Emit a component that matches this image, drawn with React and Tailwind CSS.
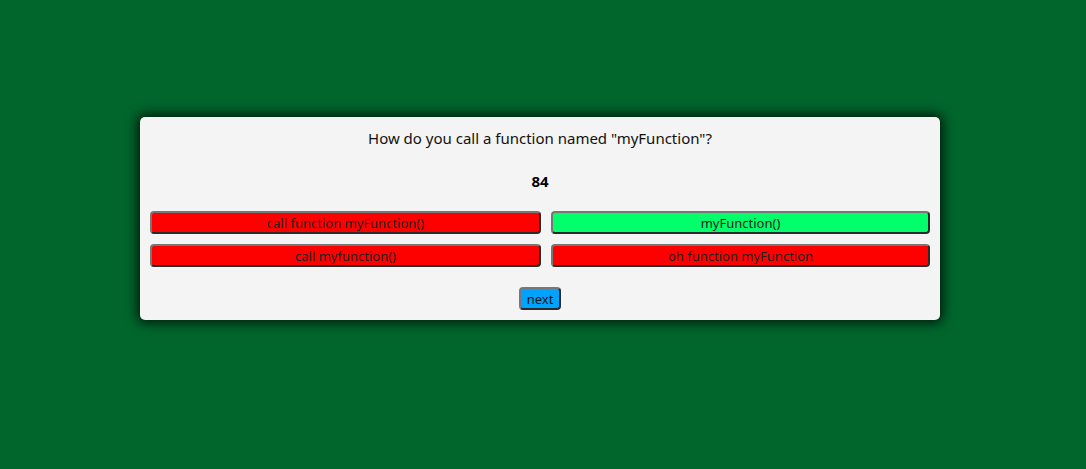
const answers = [
  { text: 'call function myFunction()', correct: false },
  { text: 'myFunction()', correct: true },
  { text: 'call myfunction()', correct: false },
  { text: 'oh function myFunction', correct: false },
]

const App = () => {
  return (
    <div className="min-h-[469px] w-full bg-[#00662c] pt-[117px] font-['Noto_Sans',sans-serif]">
      <div className="ml-[140px] w-[800px] rounded-[5px] bg-[#f4f4f4] p-[10px] shadow-[0_0_12px_3px_rgba(0,0,0,0.75)]">
        <h2 className="text-center text-[15px] leading-[22px] text-[#111]">
          How do you call a function named "myFunction"?
        </h2>
        <p className="mt-[21px] text-center text-[15px] font-bold leading-[22px] text-black">84</p>

        {/* Answer buttons */}
        <div className="mt-[19px] grid grid-cols-[391px_379px] gap-[10px]">
          {answers.map(({ text, correct }) => (
            <button
              key={text}
              type="button"
              className={`h-[23px] rounded-[4px] border-2 border-t-[#777] border-l-[#777] border-b-[#2a2a2a] border-r-[#2a2a2a] pt-[2px] text-[13px] leading-none text-[#222]
                ${correct ? 'bg-[#00ff6a]' : 'bg-[#ff0000]'}`}
            >
              {text}
            </button>
          ))}
        </div>

        <div className="mt-[20px] flex justify-center">
          <button
            type="button"
            className="h-[23px] w-[42px] rounded-[4px] border-2 border-t-[#777] border-l-[#777] border-b-[#2a2a2a] border-r-[#2a2a2a] bg-[#00a2ff] pt-[2px] text-[13px] leading-none text-[#111]"
          >
            next
          </button>
        </div>
      </div>
    </div>
  )
}

export default App
